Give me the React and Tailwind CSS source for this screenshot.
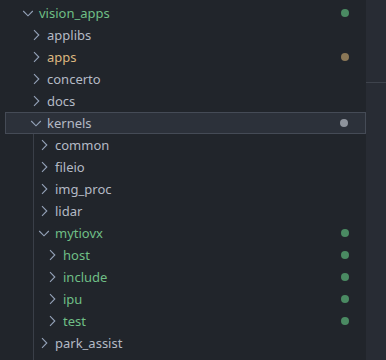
import React from "react";

const rows = [
  { name: "vision_apps", depth: 0, open: true, color: "text-[#6fbf86]", dot: "bg-[#4a8a62]" },
  { name: "applibs", depth: 1 },
  { name: "apps", depth: 1, color: "text-[#dcb880]", dot: "bg-[#8a7757]" },
  { name: "concerto", depth: 1 },
  { name: "docs", depth: 1 },
  { name: "kernels", depth: 1, open: true, selected: true, dot: "bg-[#8e939c]" },
  { name: "common", depth: 2 },
  { name: "fileio", depth: 2 },
  { name: "img_proc", depth: 2 },
  { name: "lidar", depth: 2 },
  { name: "mytiovx", depth: 2, open: true, color: "text-[#6fbf86]", dot: "bg-[#4a8a62]" },
  { name: "host", depth: 3, color: "text-[#6fbf86]", dot: "bg-[#4a8a62]" },
  { name: "include", depth: 3, color: "text-[#6fbf86]", dot: "bg-[#4a8a62]" },
  { name: "ipu", depth: 3, color: "text-[#6fbf86]", dot: "bg-[#4a8a62]" },
  { name: "test", depth: 3, color: "text-[#6fbf86]", dot: "bg-[#4a8a62]" },
  { name: "park_assist", depth: 2 },
];

function Chevron({ open }) {
  return (
    <svg width="16" height="16" viewBox="0 0 16 16" fill="none" stroke="#94a2b8" strokeWidth="1.1" className="shrink-0">
      {open ? <path d="M3.2 6 L8 10.8 L12.8 6" /> : <path d="M6 3.2 L10.8 8 L6 12.8" />}
    </svg>
  );
}

const pad = ["pl-[20px]", "pl-[28px]", "pl-[36px]", "pl-[44px]"];

export default function App() {
  return (
    <div className="w-[386px] h-[360px] overflow-hidden flex bg-[#21252b]" style={{ fontFamily: '"Noto Sans", "Open Sans", sans-serif' }}>
      <div className="relative w-[366px] h-full pt-[2px] flex flex-col">
        <div className="absolute left-[33px] top-[134px] bottom-0 w-px bg-[#3a3f48]" />
        {rows.map((r) => (
          <div
            key={r.name}
            className={`h-[22px] shrink-0 flex items-center pr-[17px] ${pad[r.depth]} ${
              r.selected ? "bg-[#2c313a] border border-[#454b56] ml-[5px] !pl-[22px]" : ""
            }`}
          >
            <Chevron open={r.open} />
            <span className={`ml-[3px] text-[13px] leading-none ${r.color || "text-[#b4bac5]"}`}>{r.name}</span>
            <div className="flex-1" />
            {r.dot && <span className={`w-[8px] h-[8px] rounded-full ${r.dot}`} />}
          </div>
        ))}
      </div>
      <div className="w-[20px] h-full bg-[#282c34] flex flex-col">
        <div className="h-[83px] border-b border-[#3e434c]" />
      </div>
    </div>
  );
}
